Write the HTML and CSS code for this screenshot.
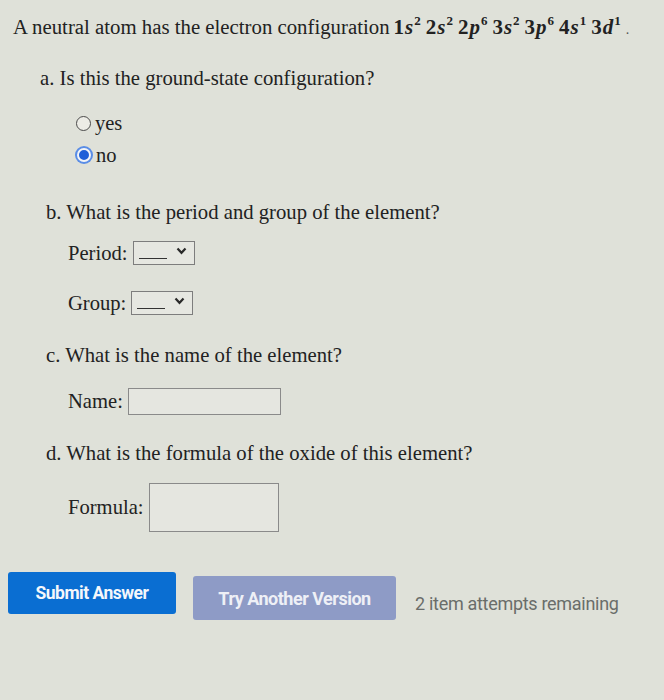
FILE: index.html
```html
<!DOCTYPE html>
<html>
<head>
<meta charset="utf-8">
<link rel="stylesheet" href="styles.css">
</head>
<body>
<div class="page">
  <p class="stem">A neutral atom has the electron configuration <span class="cfg"><span class="t"><b>1</b><i>s</i><sup>2</sup></span><span class="t"><b>2</b><i>s</i><sup>2</sup></span><span class="t"><b>2</b><i>p</i><sup>6</sup></span><span class="t"><b>3</b><i>s</i><sup>2</sup></span><span class="t"><b>3</b><i>p</i><sup>6</sup></span><span class="t"><b>4</b><i>s</i><sup>1</sup></span><span class="t"><b>3</b><i>d</i><sup>1</sup></span></span><span class="dot-end">.</span></p>

  <p class="q qa">a. Is this the ground-state configuration?</p>
  <div class="radios">
    <div class="radio r-yes"><span class="circle"></span><span>yes</span></div>
    <div class="radio r-no"><span class="circle on"></span><span>no</span></div>
  </div>

  <p class="q qb">b. What is the period and group of the element?</p>
  <div class="field f-period"><span class="lbl">Period:</span><span class="select"><span class="blank"></span><svg class="chev" width="11" height="8" viewBox="0 0 11 8"><path d="M1.5 1.5 L5.5 5.8 L9.5 1.5" fill="none" stroke="#2a2a2a" stroke-width="2.2"/></svg></span></div>
  <div class="field f-group"><span class="lbl">Group:</span><span class="select"><span class="blank"></span><svg class="chev" width="11" height="8" viewBox="0 0 11 8"><path d="M1.5 1.5 L5.5 5.8 L9.5 1.5" fill="none" stroke="#2a2a2a" stroke-width="2.2"/></svg></span></div>

  <p class="q qc">c. What is the name of the element?</p>
  <div class="field f-name"><span class="lbl">Name:</span><span class="input name-box"></span></div>

  <p class="q qd">d. What is the formula of the oxide of this element?</p>
  <div class="field f-formula"><span class="lbl">Formula:</span><span class="input formula-box"></span></div>

  <div class="actions">
    <span class="btn submit">Submit Answer</span>
    <span class="btn another">Try Another Version</span>
    <span class="remaining">2 item attempts remaining</span>
  </div>
</div>
</body>
</html>
```

FILE: styles.css
```css
html, body {
  margin: 0;
  padding: 0;
  background: #dfe1d9;
}
body {
  width: 664px;
  height: 700px;
  overflow: hidden;
  font-family: "Liberation Serif", "Times New Roman", serif;
  color: #222;
}
.page {
  padding: 15px 0 0 13px;
  display: flex;
  flex-direction: column;
  align-items: flex-start;
}
p { margin: 0; }
.stem {
  font-size: 20.8px;
  line-height: 24px;
  display: flex;
  align-items: baseline;
  white-space: nowrap;
}
.cfg {
  margin-left: 4px;
  display: inline-flex;
  align-items: baseline;
  font-size: 21px;
}
.cfg .t { margin-right: 5px; display: inline-flex; align-items: baseline; }
.cfg b { font-weight: bold; }
.cfg i { font-weight: bold; font-style: italic; margin-left: 1px; }
.cfg sup {
  font-size: 13px;
  line-height: 0;
  position: relative;
  top: -9px;
  margin-left: 1px;
  font-weight: bold;
}
.dot-end { margin-left: 0; font-size: 14px; color: #555; }

.q {
  font-size: 20.7px;
  line-height: 24px;
  margin-left: 33px;
}
.qa { margin-top: 24px; margin-left: 27px; }
.radios { margin-left: 63px; display: flex; flex-direction: column; }
.radio {
  display: flex;
  align-items: center;
  font-size: 20.5px;
  line-height: 24px;
  height: 24px;
}
.r-yes { margin-top: 21px; }
.r-no { margin-top: 8px; }
.circle {
  width: 13px;
  height: 13px;
  border: 1.5px solid #4a4a4a;
  border-radius: 50%;
  background: #ecece6;
  margin-right: 4px;
  box-sizing: content-box;
}
.r-no .circle { margin-right: 5px; }
.circle.on {
  width: 10px;
  height: 10px;
  background: #1f5fd8;
  border: 2.5px solid #f2f4f8;
  box-shadow: 0 0 0 2px #5a8de6;
  margin-left: 1px;
}
.qb { margin-top: 33px; }
.field {
  display: flex;
  align-items: center;
  margin-left: 55px;
  font-size: 20.6px;
}
.lbl { margin-right: 5px; }
.f-period { margin-top: 17px; }
.f-group { margin-top: 26px; }
.select {
  border: 1px solid #7d7d7d;
  background: #e6e7e1;
  display: flex;
  align-items: flex-end;
  justify-content: space-between;
  padding: 0 7px 4px 5px;
  box-sizing: border-box;
  width: 62px;
  height: 24px;
}
.blank {
  width: 28px;
  height: 1.5px;
  background: #333;
  margin-bottom: 1px;
}
.chev { margin-bottom: 5px; }
.qc { margin-top: 28px; }
.f-name { margin-top: 21px; }
.input {
  border: 1px solid #8a8a8a;
  background: #e5e6e0;
  box-sizing: border-box;
}
.name-box { width: 153px; height: 27px; }
.qd { margin-top: 26px; }
.f-formula { margin-top: 18px; }
.formula-box { width: 130px; height: 49px; }

.actions {
  margin-top: 40px;
  margin-left: -5px;
  display: flex;
  align-items: flex-start;
  font-family: Roboto, "Liberation Sans", sans-serif;
}
.btn {
  display: flex;
  align-items: center;
  justify-content: center;
  border-radius: 3px;
  font-weight: bold;
  font-size: 17.5px;
  letter-spacing: -0.5px;
}
.submit {
  width: 168px;
  height: 42px;
  background: #0a6ed2;
  color: #f4f7fb;
}
.another {
  width: 203px;
  height: 44px;
  margin-left: 17px;
  margin-top: 4px;
  background: #8e9bc6;
  color: #eef0f6;
  font-size: 18px;
}
.remaining {
  margin-left: 19px;
  margin-top: 21px;
  font-size: 18px;
  color: #6a6d6a;
  letter-spacing: -0.3px;
}
```
